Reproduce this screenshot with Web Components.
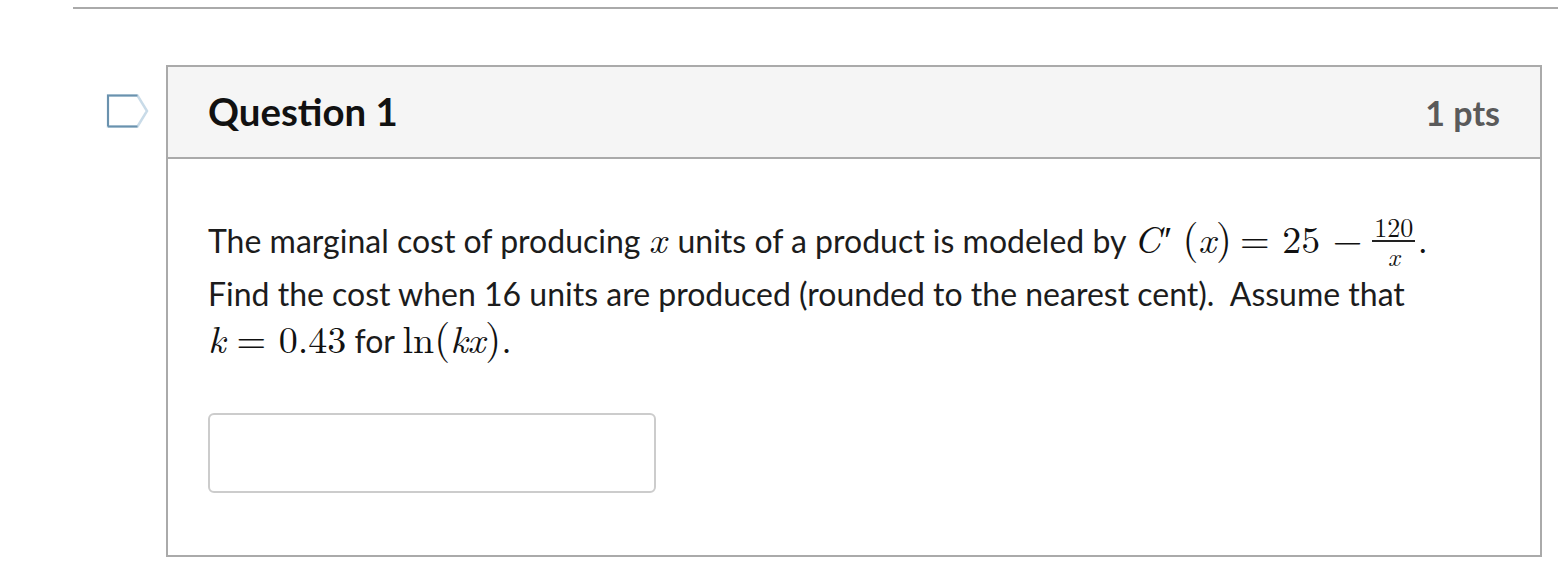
<!DOCTYPE html>
<html>
<head>
<meta charset="utf-8">
<style>
  html, body { margin: 0; background: #fff; }
  body { font-family: Lato, "Liberation Sans", sans-serif; color: #2d3b45; overflow: hidden; }
  .p { font-size: 41px; }
  .gap { margin-left: 10px; }
  .eq { margin-left: 8px; }
  .keq { margin-left: 11px; }
  .prime { margin-left: 3px; }
  .after { margin-right: 3px; }
</style>
</head>
<body>
<quiz-page>
  <question-card name="Question 1" points="1 pts">
    <math-text>
      <div class="l1">The marginal cost of producing <i-m class="after">x</i-m> units of a product is modeled by <i-m>C</i-m><r-m class="prime">′</r-m><r-m class="p gap">(</r-m><i-m>x</i-m><r-m class="p">)</r-m><r-m class="eq">= 25 −</r-m><math-frac top="120" bottom="x"></math-frac><r-m>.</r-m></div>
      <div class="l2">Find the cost when 16 units are produced (rounded to the nearest cent).&nbsp; Assume that</div>
      <div class="l3"><i-m>k</i-m><r-m class="keq">= 0.43</r-m> for <r-m>ln</r-m><r-m class="p">(</r-m><i-m>kx</i-m><r-m class="p">)</r-m><r-m>.</r-m></div>
    </math-text>
    <answer-box></answer-box>
  </question-card>
</quiz-page>

<script>
const mathFont = '"Latin Modern Roman", "Liberation Serif", "Times New Roman", serif'

// inline italic math letter
class MathItalic extends HTMLElement {
  constructor() {
    super()
    this.attachShadow({mode:'open'}).innerHTML = `<style>:host{display:inline;font-family:${mathFont};font-style:italic;font-size:38px;line-height:1;color:#111}</style><slot></slot>`
  }
}
customElements.define('i-m', MathItalic)

// inline upright math text
class MathRoman extends HTMLElement {
  constructor() {
    super()
    this.attachShadow({mode:'open'}).innerHTML = `<style>:host{display:inline;font-family:${mathFont};font-size:38px;line-height:1;color:#111}</style><slot></slot>`
  }
}
customElements.define('r-m', MathRoman)

class MathFrac extends HTMLElement {
  constructor() {
    super()
    this.attachShadow({mode:'open'}).innerHTML = `
      <style>
        :host { display: inline-flex; flex-direction: column; align-items: center; vertical-align: 16px; margin: 0 2px 0 10px; font-family: ${mathFont}; font-size: 26px; line-height: 22px; color: #111; }
        .top { border-bottom: 2px solid #222; padding: 0 2px 2px; }
        .bottom { font-style: italic; margin-top: 3px; }
      </style>
      <span class="top">${this.getAttribute('top')}</span>
      <span class="bottom">${this.getAttribute('bottom')}</span>`
  }
}
customElements.define('math-frac', MathFrac)

class MathText extends HTMLElement {
  constructor() {
    super()
    this.attachShadow({mode:'open'}).innerHTML = `
      <style>
        :host { display: block; font-size: 32px; color: #1c1c1c; }
        ::slotted(div) { height: 52px; line-height: 48px; white-space: nowrap; }
        ::slotted(.l1) { height: 54px; }
        ::slotted(.l2) { height: 46px; }
        ::slotted(.l3) { height: 51px; }
      </style>
      <slot></slot>`
  }
}
customElements.define('math-text', MathText)

class AnswerBox extends HTMLElement {
  constructor() {
    super()
    this.attachShadow({mode:'open'}).innerHTML = `
      <style>
        :host { display: block; width: 448px; height: 80px; margin-top: 46px; box-sizing: border-box; border: 2px solid #ccc; border-radius: 6px; background: #fff; }
      </style>`
  }
}
customElements.define('answer-box', AnswerBox)

class FlagIcon extends HTMLElement {
  constructor() {
    super()
    this.attachShadow({mode:'open'}).innerHTML = `
      <style>:host { display: block; width: 44px; height: 36px; } svg { display: block; }</style>
      <svg width="44" height="36" viewBox="0 0 44 36">
        <path d="M2 2.5H31.5L41 18L31.5 33.5H2Z" fill="#fff" stroke="#c9dbe8" stroke-width="2.5"/>
        <path d="M2 33.5V2.5H31.5M2 33.5H31.5" fill="none" stroke="#6a92ae" stroke-width="2"/>
      </svg>`
  }
}
customElements.define('flag-icon', FlagIcon)

class QuestionCard extends HTMLElement {
  constructor() {
    super()
    this.attachShadow({mode:'open'}).innerHTML = `
      <style>
        :host { display: block; width: 1376px; height: 492px; box-sizing: border-box; border: 2px solid #aaa; }
        .head { display: flex; justify-content: space-between; align-items: center; height: 92px; box-sizing: border-box; padding: 0 40px; background: #f5f5f5; border-bottom: 2px solid #aaa; }
        .name { font-size: 38.4px; font-weight: 700; color: #111; margin-top: -2px; }
        .pts { font-size: 34px; font-weight: 700; color: #5a5a5a; }
        .body { padding: 57px 40px 0; }
      </style>
      <div class="head"><span class="name">${this.getAttribute('name')}</span><span class="pts">${this.getAttribute('points')}</span></div>
      <div class="body"><slot></slot></div>`
  }
}
customElements.define('question-card', QuestionCard)

class QuizPage extends HTMLElement {
  constructor() {
    super()
    this.attachShadow({mode:'open'}).innerHTML = `
      <style>
        :host { display: block; padding: 7px 0 0 73px; }
        .rule { height: 2px; background: #aaa; }
        .row { display: flex; align-items: flex-start; margin-top: 56px; }
        .flag { width: 93px; padding-top: 28px; box-sizing: border-box; padding-left: 33px; }
      </style>
      <div class="rule"></div>
      <div class="row">
        <div class="flag"><flag-icon></flag-icon></div>
        <slot></slot>
      </div>`
  }
}
customElements.define('quiz-page', QuizPage)
</script>
</body>
</html>
